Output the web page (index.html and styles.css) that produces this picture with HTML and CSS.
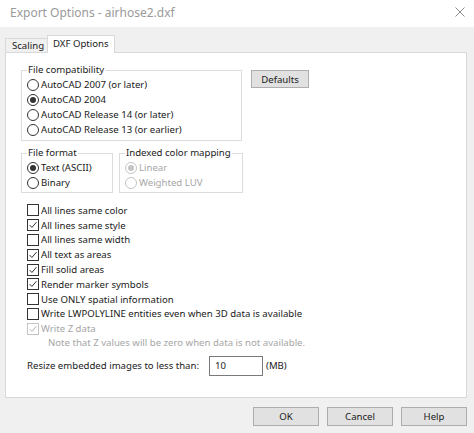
FILE: index.html
```html
<!DOCTYPE html>
<html>
<head>
<meta charset="utf-8">
<link rel="stylesheet" href="styles.css">
</head>
<body>
<div class="window">
  <div class="titlebar">
    <span class="title">Export Options - airhose2.dxf</span>
    <svg class="close" width="10" height="10" viewBox="0 0 10 10"><path d="M0.5 0.5 L9.5 9.5 M9.5 0.5 L0.5 9.5" stroke="#8a8a8a" stroke-width="1" fill="none"/></svg>
  </div>
  <div class="tabs">
    <div class="tab">Scaling</div>
    <div class="tab active">DXF Options</div>
  </div>
  <div class="panel">
    <div class="row-top">
      <fieldset class="group compat">
        <legend>File compatibility</legend>
        <div class="opt"><span class="radio"></span>AutoCAD 2007 (or later)</div>
        <div class="opt"><span class="radio on"></span>AutoCAD 2004</div>
        <div class="opt"><span class="radio"></span>AutoCAD Release 14 (or later)</div>
        <div class="opt"><span class="radio"></span>AutoCAD Release 13 (or earlier)</div>
      </fieldset>
      <button class="btn defaults">Defaults</button>
    </div>
    <div class="row-mid">
      <fieldset class="group format">
        <legend>File format</legend>
        <div class="opt"><span class="radio on"></span>Text (ASCII)</div>
        <div class="opt"><span class="radio"></span>Binary</div>
      </fieldset>
      <fieldset class="group colormap">
        <legend>Indexed color mapping</legend>
        <div class="opt disabled"><span class="radio on"></span>Linear</div>
        <div class="opt disabled"><span class="radio"></span>Weighted LUV</div>
      </fieldset>
    </div>
    <div class="checks">
      <div class="opt"><span class="check"></span>All lines same color</div>
      <div class="opt"><span class="check"><svg viewBox="0 0 11 11"><path d="M1.8 5.6 L4.3 8.2 L9.3 2.4" stroke="currentColor" stroke-width="1.1" fill="none"/></svg></span>All lines same style</div>
      <div class="opt"><span class="check"></span>All lines same width</div>
      <div class="opt"><span class="check"><svg viewBox="0 0 11 11"><path d="M1.8 5.6 L4.3 8.2 L9.3 2.4" stroke="currentColor" stroke-width="1.1" fill="none"/></svg></span>All text as areas</div>
      <div class="opt"><span class="check"><svg viewBox="0 0 11 11"><path d="M1.8 5.6 L4.3 8.2 L9.3 2.4" stroke="currentColor" stroke-width="1.1" fill="none"/></svg></span>Fill solid areas</div>
      <div class="opt"><span class="check"><svg viewBox="0 0 11 11"><path d="M1.8 5.6 L4.3 8.2 L9.3 2.4" stroke="currentColor" stroke-width="1.1" fill="none"/></svg></span>Render marker symbols</div>
      <div class="opt"><span class="check"></span>Use ONLY spatial information</div>
      <div class="opt"><span class="check"></span>Write LWPOLYLINE entities even when 3D data is available</div>
      <div class="opt disabled"><span class="check"><svg viewBox="0 0 11 11"><path d="M1.8 5.6 L4.3 8.2 L9.3 2.4" stroke="currentColor" stroke-width="1.1" fill="none"/></svg></span>Write Z data</div>
    </div>
    <div class="note">Note that Z values will be zero when data is not available.</div>
    <div class="resize">
      <span class="resize-label">Resize embedded images to less than:</span>
      <span class="input">10</span>
      <span class="unit">(MB)</span>
    </div>
  </div>
  <div class="footer">
    <button class="btn">OK</button>
    <button class="btn">Cancel</button>
    <button class="btn">Help</button>
  </div>
</div>
</body>
</html>
```

FILE: styles.css
```css
* { box-sizing: border-box; }

body {
  margin: 0;
  background: #f0f0f0;
  font-family: "Noto Sans", "Open Sans", sans-serif;
  font-size: 9.6px;
  color: #1a1a1a;
}

.window {
  width: 474px;
  height: 433px;
  display: flex;
  flex-direction: column;
}

.titlebar {
  height: 27px;
  background: #ffffff;
  display: flex;
  align-items: center;
  justify-content: space-between;
  padding: 0 9px 3px 10px;
}

.title {
  font-size: 12px;
  color: #9a9a9a;
}

.close {
  display: block;
  width: 10px;
  height: 10px;
}

.tabs {
  height: 26px;
  display: flex;
  align-items: flex-end;
  padding-left: 5px;
  margin-bottom: -1px;
  position: relative;
  z-index: 1;
}

.tab {
  height: 15px;
  width: 42px;
  padding: 0 0 0 6px;
  border: 1px solid #d9d9d9;
  border-right: none;
  background: #f0f0f0;
  display: flex;
  align-items: center;
  white-space: nowrap;
}

.tab.active {
  height: 18px;
  width: 68px;
  background: #ffffff;
  border-right: 1px solid #d9d9d9;
  border-bottom: none;
  padding: 0 0 2px 5px;
}

.panel {
  height: 346px;
  margin: 0 7px 0 5px;
  background: #ffffff;
  border: 1px solid #d9d9d9;
  padding: 10px 0 0 15px;
}

.group {
  margin: 0;
  border: 1px solid #dcdcdc;
  padding: 0 4px 3px 5px;
  min-inline-size: 0;
}

.group legend {
  padding: 0 1px;
  line-height: 14px;
  height: 14px;
}

.opt {
  display: flex;
  align-items: center;
  height: 15px;
  white-space: nowrap;
}

.radio {
  width: 12px;
  height: 12px;
  border: 1px solid #333333;
  border-radius: 50%;
  background: #ffffff;
  margin-right: 2px;
  display: flex;
  align-items: center;
  justify-content: center;
  flex: none;
}

.radio.on::after {
  content: "";
  width: 6px;
  height: 6px;
  border-radius: 50%;
  background: #333333;
}

.opt.disabled {
  color: #a6a6a6;
}

.opt.disabled .radio {
  border-color: #c4c4c4;
}

.opt.disabled .radio.on::after {
  background: #c4c4c4;
}

.row-top {
  display: flex;
  align-items: flex-start;
}

.compat {
  width: 221px;
}

.btn {
  font-family: inherit;
  font-size: 9.6px;
  color: #1a1a1a;
  background: #e1e1e1;
  border: 1px solid #adadad;
  padding: 0;
  margin: 0;
  height: 19px;
  width: 66px;
}

.defaults {
  width: 58px;
  height: 18px;
  margin: 7px 0 0 9px;
}

.row-mid {
  display: flex;
  gap: 6px;
  margin-top: 5px;
}

.row-mid .group {
  padding-bottom: 2px;
}

.format {
  width: 92px;
}

.colormap {
  width: 124px;
}

.checks {
  margin-top: 10px;
  padding-left: 6px;
}

.checks .opt {
  height: 14.8px;
}

.check {
  width: 12px;
  height: 12px;
  border: 1px solid #333333;
  background: #ffffff;
  margin-right: 2px;
  flex: none;
  color: #333333;
  display: flex;
}

.check svg {
  width: 10px;
  height: 10px;
}

.opt.disabled .check {
  border-color: #c4c4c4;
  color: #b4b4b4;
}

.note {
  height: 14.8px;
  line-height: 14.8px;
  padding-left: 27px;
  color: #a6a6a6;
  white-space: nowrap;
}

.resize {
  margin-top: 5px;
  padding-left: 6px;
  display: flex;
  align-items: center;
}

.resize-label {
  width: 182px;
}

.input {
  width: 54px;
  height: 20px;
  border: 1px solid #7a7a7a;
  padding-left: 5px;
  display: flex;
  align-items: center;
}

.unit {
  margin-left: 3px;
}

.footer {
  flex: 1;
  display: flex;
  justify-content: flex-end;
  gap: 8px;
  padding: 9px 7px 0 0;
}
```
